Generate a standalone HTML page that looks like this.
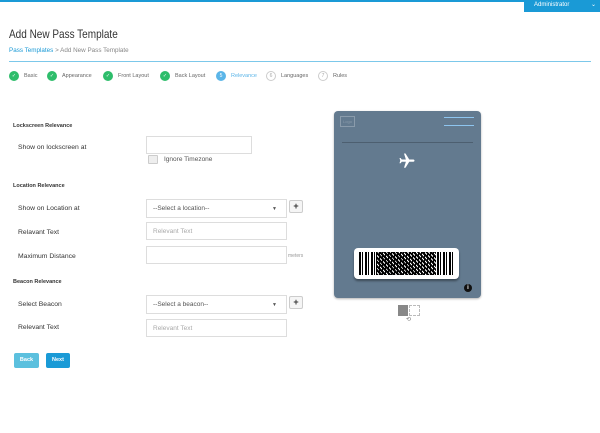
<!DOCTYPE html>
<html><head><style>
*{margin:0;padding:0;box-sizing:border-box}
body{width:600px;height:433px;background:#fff;font-family:"Liberation Sans",sans-serif;position:relative;overflow:hidden;color:#333}
.a{position:absolute}
.inp{position:absolute;border:1px solid #ddd;background:#fff;font-size:6.5px;color:#aaa;padding-left:6px;display:flex;align-items:center}
.lbl{position:absolute;font-size:6.8px;color:#333}
.sec{position:absolute;font-size:5.5px;font-weight:bold;color:#333}
.step{position:absolute;top:71px;height:10px;display:flex;align-items:center;font-size:5.5px;color:#666}
.c{width:10px;height:10px;border-radius:50%;background:#2ebd6b;margin-right:5px;position:relative;color:#fff;font-size:5px;display:flex;align-items:center;justify-content:center}
.plus{position:absolute;width:14px;height:13px;border:1px solid #ccc;border-radius:2px;background:#f5f5f5;font-size:9px;font-weight:bold;text-align:center;line-height:11px;color:#333}
</style></head><body>
<div class="a" style="left:0;top:0;width:600px;height:1.5px;background:#1a9ad6"></div>
<div class="a" style="left:524px;top:0;width:76px;height:12px;background:#1a9ad6;color:#fff;font-size:6px;line-height:11px;padding-left:10px">Administrator<span style="position:absolute;right:4px">⌄</span></div>
<div class="a" style="left:9px;top:29px;font-size:10px;color:#333;transform:scaleY(1.15);transform-origin:left top">Add New Pass Template</div>
<div class="a" style="left:9px;top:47px;font-size:6.3px;color:#888"><span style="color:#1a9ad6">Pass Templates</span> &gt; Add New Pass Template</div>
<div class="a" style="left:9px;top:61px;width:582px;height:1px;background:#7cc8ea"></div>
<div class="step" style="left:9px"><div class="c">✓</div>Basic</div>
<div class="step" style="left:47px"><div class="c">✓</div>Appearance</div>
<div class="step" style="left:103px"><div class="c">✓</div>Front Layout</div>
<div class="step" style="left:160px"><div class="c">✓</div>Back Layout</div>
<div class="step" style="left:216px;color:#5bb5e8"><div class="c" style="background:#5bb5e8">5</div>Relevance</div>
<div class="step" style="left:266px"><div class="c" style="background:#fff;border:1px solid #ccc;color:#aaa">6</div>Languages</div>
<div class="step" style="left:318px"><div class="c" style="background:#fff;border:1px solid #ccc;color:#aaa">7</div>Rules</div>

<div class="sec" style="left:13px;top:123px">Lockscreen Relevance</div>
<div class="lbl" style="left:18px;top:144px">Show on lockscreen at</div>
<div class="inp" style="left:146px;top:136px;width:106px;height:18px"></div>
<div class="a" style="left:148px;top:155px;width:10px;height:9px;border:1px solid #ccc;background:#eee;border-radius:1px"></div>
<div class="lbl" style="left:164px;top:156px;font-size:6.5px;color:#555">Ignore Timezone</div>

<div class="sec" style="left:13px;top:183px">Location Relevance</div>
<div class="lbl" style="left:18px;top:205px">Show on Location at</div>
<div class="inp" style="left:146px;top:199px;width:141px;height:19px;color:#555">--Select a location--<span style="position:absolute;right:9px;font-size:5px">▼</span></div>
<div class="plus" style="left:289px;top:200px">+</div>
<div class="lbl" style="left:18px;top:229px">Relavant Text</div>
<div class="inp" style="left:146px;top:222px;width:141px;height:18px">Relevant Text</div>
<div class="lbl" style="left:18px;top:253px">Maximum Distance</div>
<div class="inp" style="left:146px;top:246px;width:141px;height:18px"></div>
<div class="a" style="left:288px;top:253px;font-size:5px;color:#999">meters</div>

<div class="sec" style="left:13px;top:279px">Beacon Relevance</div>
<div class="lbl" style="left:18px;top:301px">Select Beacon</div>
<div class="inp" style="left:146px;top:295px;width:141px;height:19px;color:#555">--Select a beacon--<span style="position:absolute;right:9px;font-size:5px">▼</span></div>
<div class="plus" style="left:289px;top:296px">+</div>
<div class="lbl" style="left:18px;top:324px">Relevant Text</div>
<div class="inp" style="left:146px;top:319px;width:141px;height:18px">Relevant Text</div>

<div class="a" style="left:14px;top:353px;width:25px;height:15px;background:#5bc0de;border-radius:2px;color:#fff;font-size:5.5px;font-weight:bold;text-align:center;line-height:15px">Back</div>
<div class="a" style="left:46px;top:353px;width:24px;height:15px;background:#1a9ad6;border-radius:2px;color:#fff;font-size:5.5px;font-weight:bold;text-align:center;line-height:15px">Next</div>

<div class="a" style="left:334px;top:111px;width:147px;height:187px;background:#637a8f;border-radius:4px;box-shadow:0 1px 2px rgba(0,0,0,.3)"></div>
<div class="a" style="left:340px;top:116px;width:15px;height:11px;border:1px solid #8a9bab;font-size:4px;color:#8a9bab;line-height:9px;text-align:center">Logo</div>
<div class="a" style="left:444px;top:117px;width:30px;height:1px;background:#8ec5ef"></div>
<div class="a" style="left:444px;top:125px;width:30px;height:1px;background:#8ec5ef"></div>
<div class="a" style="left:342px;top:142px;width:131px;height:1px;background:#4d5f70"></div>
<svg class="a" style="left:398px;top:152px" width="18" height="18" viewBox="0 0 24 24"><path fill="#fff" d="M21 16v-2l-8-5V3.5C13 2.7 12.3 2 11.5 2S10 2.7 10 3.5V9l-8 5v2l8-2.5V19l-2 1.5V22l3.5-1 3.5 1v-1.5L13 19v-5.5z" transform="rotate(90 12 12)"/></svg>
<div class="a" style="left:354px;top:248px;width:105px;height:31px;background:#fff;border-radius:4px;box-shadow:0 2px 2px rgba(0,0,0,.4)"></div>
<div class="a" style="left:359px;top:252px;width:95px;height:23px;background:repeating-linear-gradient(90deg,#000 0 2px,#fff 2px 3px,#000 3px 4px,#fff 4px 6px)"></div>
<div class="a" style="left:376px;top:252px;width:60px;height:23px;background:repeating-linear-gradient(45deg,#000 0 2px,#fff 2px 3px),repeating-linear-gradient(90deg,#000 0 1px,#fff 1px 3px);background-blend-mode:multiply"></div>
<div class="a" style="left:464px;top:284px;width:8px;height:8px;border-radius:50%;background:#111;color:#fff;font-size:6px;font-weight:bold;text-align:center;line-height:8px">i</div>
<div class="a" style="left:398px;top:305px;width:10px;height:11px;background:#888"></div>
<div class="a" style="left:409px;top:305px;width:11px;height:11px;border:1px dashed #bbb"></div>
<div class="a" style="left:406px;top:316px;font-size:6px;color:#777">⟲</div>
</body></html>
